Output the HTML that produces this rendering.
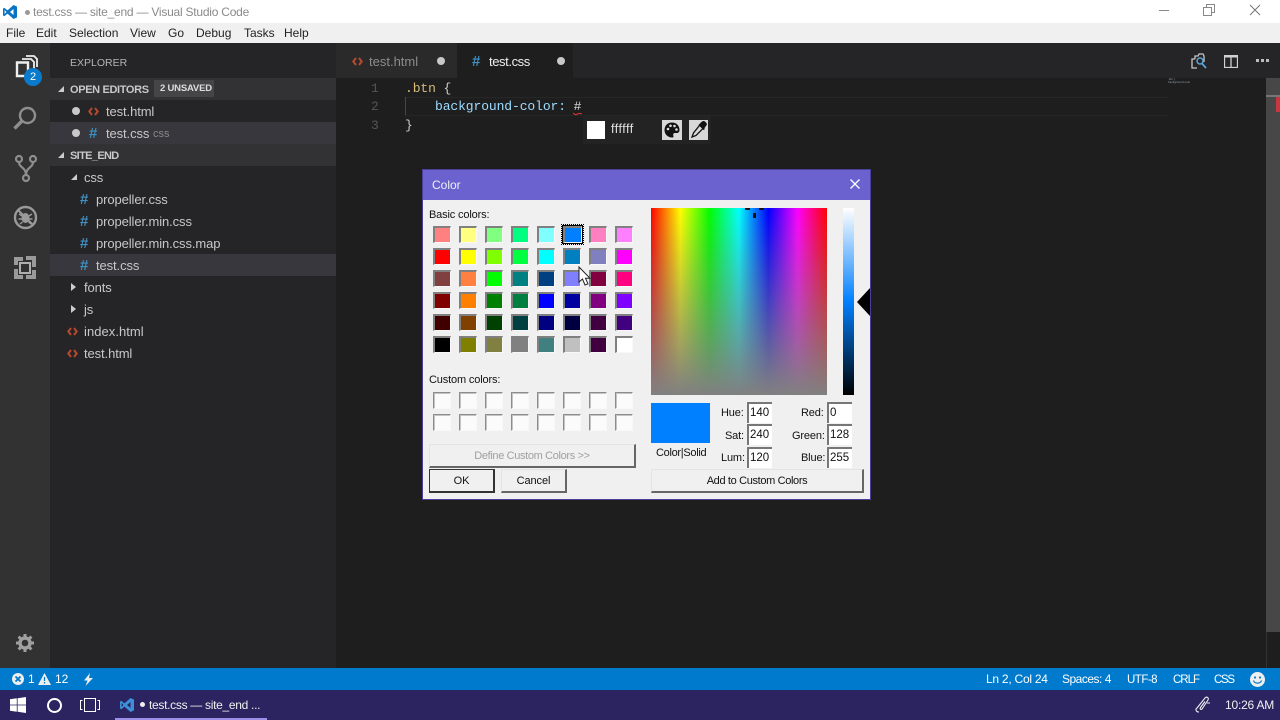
<!DOCTYPE html>
<html><head><meta charset="utf-8"><style>
*{box-sizing:border-box}
html,body{margin:0;padding:0}
body{width:1280px;height:720px;overflow:hidden;position:relative;background:#1f1e1f;font-family:"Liberation Sans",sans-serif;font-size:12px;color:#ccc}
.a{position:absolute}
.t{position:absolute;white-space:nowrap;line-height:16px}
.sw{position:absolute;width:18px;height:17px;border-style:solid;border-width:2px 1px 1px 2px;border-color:#808080 #f8f8f8 #f8f8f8 #808080}
.cw{position:absolute;width:18px;height:17px;background:#fbfbfb;border:1px solid;border-color:#8c8c8c #f8f8f8 #f8f8f8 #8c8c8c;box-shadow:inset 1px 1px 0 #c4c4c4}
.inp{position:absolute;background:#fff;border-top:2px solid #777;border-left:2px solid #777;color:#111;font-size:11.5px;line-height:19px;padding-left:1px;height:21px}
.btn{position:absolute;background:#f0f0f0;border:1px solid #e4e4e4;border-right:2px solid #666;border-bottom:2px solid #666;color:#111;text-align:center;font-size:11px;letter-spacing:-.1px;line-height:22px;height:24px}
.dt{color:#111;font-size:11px;letter-spacing:-.15px;margin-top:1px}
.f{font-size:13px;color:#c8c8c8;letter-spacing:-.1px;margin-top:1px}
.hash{position:absolute;color:#3f8fc2;font-size:15px;font-weight:bold;line-height:16px;margin-top:1px}
.ic{position:absolute}
.code{position:absolute;font-family:"Liberation Mono",monospace;font-size:13px;line-height:18px;white-space:pre;letter-spacing:-.1px;margin-top:1px}
.sb{position:absolute;top:671px;color:#fff;font-size:12px;line-height:16px;white-space:nowrap}
.m{top:25px;color:#222;font-size:12px}
</style></head><body>

<!-- title bar -->
<div class="a" style="left:0;top:0;width:1280px;height:23px;background:#fff"></div>
<svg class="a" style="left:2px;top:4px" width="16" height="16" viewBox="0 0 16 16"><path d="M11.5 1L15 2.6V13.4L11.5 15L5.5 9.6L2.2 12.2L1 11.4V4.6L2.2 3.8L5.5 6.4ZM11.5 5L8 8L11.5 11ZM2.6 6V10L4.4 8Z" fill="#0a74c4"/></svg>
<div class="a" style="left:25px;top:10px;width:5px;height:5px;border-radius:3px;background:#999"></div>
<div class="t" style="left:33px;top:4px;color:#8a8a8a;font-size:12px;letter-spacing:-.23px">test.css — site_end — Visual Studio Code</div>
<div class="a" style="left:1159px;top:10px;width:10px;height:1px;background:#888"></div>
<svg class="a" style="left:1203px;top:4px" width="12" height="12" viewBox="0 0 12 12"><path d="M.5 3.5H8.5V11.5H.5ZM3.5 3.5V.5H11.5V8.5H8.5" fill="none" stroke="#888"/></svg>
<svg class="a" style="left:1249px;top:4px" width="12" height="12" viewBox="0 0 12 12"><path d="M1 1L11 11M11 1L1 11" stroke="#777" stroke-width="1"/></svg>

<!-- menu -->
<div class="a" style="left:0;top:23px;width:1280px;height:20px;background:#f0f0f0"></div>
<div class="t m" style="left:6px">File</div>
<div class="t m" style="left:36px">Edit</div>
<div class="t m" style="left:69px">Selection</div>
<div class="t m" style="left:130px">View</div>
<div class="t m" style="left:168px">Go</div>
<div class="t m" style="left:196px">Debug</div>
<div class="t m" style="left:244px">Tasks</div>
<div class="t m" style="left:284px">Help</div>

<!-- activity bar -->
<div class="a" style="left:0;top:43px;width:50px;height:625px;background:#323233"></div>
<svg class="a" style="left:13px;top:54px" width="26" height="26" viewBox="0 0 26 26"><path d="M4 8.5H15V22H4Z" fill="none" stroke="#eee" stroke-width="2.4"/><path d="M9 5H18L21 8V17M13 2H21L24 5V13" fill="none" stroke="#eee" stroke-width="1.8"/></svg>
<div class="a" style="left:24px;top:68px;width:18px;height:18px;border-radius:9px;background:#0a7acc;color:#fff;font-size:11px;line-height:18px;text-align:center">2</div>
<svg class="a" style="left:12px;top:105px" width="26" height="26" viewBox="0 0 26 26"><circle cx="15.5" cy="10.5" r="7.5" fill="none" stroke="#8e8e8e" stroke-width="2.4"/><path d="M10 16L2.5 23.5" stroke="#8e8e8e" stroke-width="3.4"/></svg>
<svg class="a" style="left:13px;top:154px" width="26" height="28" viewBox="0 0 26 28"><g fill="none" stroke="#8e8e8e" stroke-width="2.2"><circle cx="6" cy="5" r="3"/><circle cx="20" cy="5" r="3"/><circle cx="13" cy="24" r="3"/><path d="M6 8C6 14 13 13 13 21M20 8C20 14 13 13 13 21"/></g></svg>
<svg class="a" style="left:13px;top:205px" width="25" height="25" viewBox="0 0 25 25"><circle cx="12.5" cy="12.5" r="10.5" fill="none" stroke="#9a9a9a" stroke-width="2.4"/><path d="M5 5L20 20" stroke="#9a9a9a" stroke-width="2"/><ellipse cx="12.5" cy="13" rx="4" ry="5" fill="#9a9a9a"/><path d="M6 9L9 11M19 9L16 11M5.5 14H9M19.5 14H16M7 19L9.5 17M18 19L15.500 17" stroke="#9a9a9a" stroke-width="1.400"/></svg>
<svg class="a" style="left:14px;top:256px" width="22" height="23" viewBox="0 0 22 23"><path d="M0 1H9V5H4V9H0ZM12 0H22V11H18V4H12ZM0 13H4V19H9V23H0ZM22 14V23H12V19H18V14Z" fill="#9a9a9a"/><rect x="6" y="7" width="10" height="10" fill="none" stroke="#b0b0b0" stroke-width="2"/></svg>
<svg class="a" style="left:15px;top:633px" width="20" height="20" viewBox="0 0 20 20"><circle cx="10" cy="10" r="5" fill="none" stroke="#a0a0a0" stroke-width="3.4"/><path d="M10 1V5M10 15V19M1 10H5M15 10H19M3.600 3.600L6.500 6.500M13.500 13.500L16.400 16.400M16.400 3.600L13.500 6.500M6.500 13.500L3.600 16.400" stroke="#a0a0a0" stroke-width="3"/></svg>

<!-- sidebar -->
<div class="a" style="left:50px;top:43px;width:286px;height:625px;background:#252427"></div>
<div class="t" style="left:70px;top:55px;font-size:10.5px;color:#b4b4b4">EXPLORER</div>
<div class="a" style="left:50px;top:78px;width:286px;height:22px;background:#323234"></div>
<div class="a" style="left:58px;top:86px;border-left:6px solid transparent;border-bottom:6px solid #ccc"></div>
<div class="t" style="left:70px;top:82px;font-size:11px;font-weight:bold;color:#c8c8c8;letter-spacing:-.35px">OPEN EDITORS</div>
<div class="a" style="left:154px;top:80px;width:60px;height:17px;background:#454547"></div>
<div class="t" style="left:160px;top:81px;font-size:9.5px;font-weight:bold;color:#ddd;letter-spacing:-.2px">2 UNSAVED</div>

<div class="a" style="left:72px;top:107px;width:8px;height:8px;border-radius:4px;background:#c8c8c8"></div>
<svg class="ic" style="left:88px;top:107px" width="11" height="9" viewBox="0 0 11 9"><path d="M4 1L1.300 4.500L4 8M7 1L9.700 4.500L7 8" fill="none" stroke="#b8492e" stroke-width="2"/></svg>
<div class="t f" style="left:106px;top:103px">test.html</div>
<div class="a" style="left:50px;top:122px;width:286px;height:22px;background:#37373d"></div>
<div class="a" style="left:72px;top:129px;width:8px;height:8px;border-radius:4px;background:#c8c8c8"></div>
<div class="hash" style="left:89px;top:125px">#</div>
<div class="t f" style="left:106px;top:125px">test.css</div>
<div class="t" style="left:153px;top:126px;font-size:11px;color:#8a8a8a">css</div>

<div class="a" style="left:50px;top:144px;width:286px;height:22px;background:#323234"></div>
<div class="a" style="left:58px;top:152px;border-left:6px solid transparent;border-bottom:6px solid #ccc"></div>
<div class="t" style="left:70px;top:148px;font-size:11px;font-weight:bold;color:#c8c8c8;letter-spacing:-.65px">SITE_END</div>

<div class="a" style="left:71px;top:174px;border-left:6px solid transparent;border-bottom:6px solid #ccc"></div>
<div class="t f" style="left:84px;top:169px">css</div>
<div class="hash" style="left:80px;top:191px">#</div>
<div class="t f" style="left:96px;top:191px">propeller.css</div>
<div class="hash" style="left:80px;top:213px">#</div>
<div class="t f" style="left:96px;top:213px">propeller.min.css</div>
<div class="hash" style="left:80px;top:235px">#</div>
<div class="t f" style="left:96px;top:235px">propeller.min.css.map</div>
<div class="a" style="left:50px;top:254px;width:286px;height:22px;background:#37373d"></div>
<div class="hash" style="left:80px;top:257px">#</div>
<div class="t f" style="left:96px;top:257px">test.css</div>
<div class="a" style="left:71px;top:283px;border-left:5px solid #ccc;border-top:4px solid transparent;border-bottom:4px solid transparent"></div>
<div class="t f" style="left:84px;top:279px">fonts</div>
<div class="a" style="left:71px;top:305px;border-left:5px solid #ccc;border-top:4px solid transparent;border-bottom:4px solid transparent"></div>
<div class="t f" style="left:84px;top:301px">js</div>
<svg class="ic" style="left:67px;top:327px" width="11" height="9" viewBox="0 0 11 9"><path d="M4 1L1.300 4.500L4 8M7 1L9.700 4.500L7 8" fill="none" stroke="#b8492e" stroke-width="2"/></svg>
<div class="t f" style="left:84px;top:323px;letter-spacing:.05px">index.html</div>
<svg class="ic" style="left:67px;top:349px" width="11" height="9" viewBox="0 0 11 9"><path d="M4 1L1.300 4.500L4 8M7 1L9.700 4.500L7 8" fill="none" stroke="#b8492e" stroke-width="2"/></svg>
<div class="t f" style="left:84px;top:345px">test.html</div>

<!-- tabs -->
<div class="a" style="left:336px;top:43px;width:944px;height:35px;background:#252426"></div>
<div class="a" style="left:336px;top:43px;width:121px;height:35px;background:#2b2a2b"></div>
<div class="a" style="left:457px;top:43px;width:116px;height:35px;background:#1e1e1f"></div>
<svg class="ic" style="left:352px;top:57px" width="11" height="9" viewBox="0 0 11 9"><path d="M4 1L1.300 4.500L4 8M7 1L9.700 4.500L7 8" fill="none" stroke="#b8492e" stroke-width="2"/></svg>
<div class="t" style="left:369px;top:54px;font-size:13px;color:#8c8c8c;letter-spacing:0">test.html</div>
<div class="a" style="left:437px;top:57px;width:8px;height:8px;border-radius:4px;background:#c8c8c8"></div>
<div class="hash" style="left:472px;top:53px">#</div>
<div class="t" style="left:489px;top:54px;font-size:13px;color:#f0f0f0;letter-spacing:-.4px">test.css</div>
<div class="a" style="left:557px;top:57px;width:8px;height:8px;border-radius:4px;background:#c8c8c8"></div>
<svg class="a" style="left:1191px;top:53px" width="17" height="17" viewBox="0 0 17 17"><path d="M4 6V3H7L8 1H12L13 3V9M6 15H1V6H4" fill="none" stroke="#c8c8c8" stroke-width="1.300"/><circle cx="9" cy="8" r="3" fill="none" stroke="#5aa4d8" stroke-width="1.500"/><path d="M11 10.500L15 15" stroke="#5aa4d8" stroke-width="1.800"/></svg>
<svg class="a" style="left:1224px;top:55px" width="14" height="13" viewBox="0 0 14 13"><path d="M.5 .5H13.500V12.500H.5ZM7 .5V12.500" fill="none" stroke="#d0d0d0" stroke-width="1.300"/><rect x="0" y="0" width="14" height="2.500" fill="#d0d0d0"/></svg>
<div class="a" style="left:1256px;top:59px;width:3px;height:3px;background:#bbb;box-shadow:5px 0 #bbb,10px 0 #bbb"></div>

<!-- editor -->
<div class="a" style="left:404px;top:97px;width:764px;height:1px;background:#262626"></div>
<div class="a" style="left:404px;top:115px;width:764px;height:1px;background:#262626"></div>
<div class="a" style="left:405px;top:97px;width:1px;height:18px;background:#3e4a50"></div>
<div class="code" style="left:371px;top:79px;color:#555">1</div>
<div class="code" style="left:371px;top:97px;color:#555">2</div>
<div class="code" style="left:371px;top:116px;color:#555">3</div>
<div class="code" style="left:405px;top:79px;color:#d7ba7d">.btn <span style="color:#ccc">{</span></div>
<div class="code" style="left:435px;top:97px;color:#9cdcfe">background-color: <span style="color:#ddd">#</span></div>
<div class="code" style="left:405px;top:116px;color:#ccc">}</div>
<svg class="a" style="left:573px;top:112px" width="9" height="4" viewBox="0 0 9 4"><path d="M0 1C2 3 3 3 4.500 2C6 1 7 1 9 2" fill="none" stroke="#d03030" stroke-width="1.200"/></svg>

<!-- color hover -->
<div class="a" style="left:583px;top:116px;width:128px;height:28px;background:#232323"></div>
<div class="a" style="left:587px;top:121px;width:18px;height:18px;background:#fff"></div>
<div class="t" style="left:611px;top:121px;font-size:12.5px;color:#e0e0e0;letter-spacing:.5px">ffffff</div>
<div class="a" style="left:662px;top:120px;width:20px;height:20px;background:#d8d8d8"></div>
<svg class="a" style="left:663px;top:121px" width="18" height="18" viewBox="0 0 18 18"><path d="M9 1.500C4.500 1.500 1.500 4.800 1.500 9C1.500 13.200 4.800 16.500 9 16.500C10.500 16.500 10.800 15.500 10.300 14.500C9.800 13.300 10.500 12 12 12H14C15.500 12 16.500 10.800 16.500 9C16.500 4.800 13.500 1.500 9 1.500Z" fill="#111"/><circle cx="5" cy="8" r="1.300" fill="#ddd"/><circle cx="7.500" cy="4.800" r="1.300" fill="#ddd"/><circle cx="11.500" cy="5" r="1.300" fill="#ddd"/><circle cx="13.500" cy="8.500" r="1.300" fill="#ddd"/></svg>
<div class="a" style="left:689px;top:120px;width:19px;height:20px;background:#d8d8d8"></div>
<svg class="a" style="left:689px;top:120px" width="19" height="20" viewBox="0 0 19 20"><path d="M12 3.500L15.500 7L7 15.500L3 17L4.500 13Z" fill="#d8d8d8" stroke="#111" stroke-width="1.300"/><path d="M11 3.500L13 1.500C14 .8 15 .8 16 1.500L17.500 3C18 4 18 5 17 6L15 8L16 9L14.500 10L9.500 5L11 3.500Z" fill="#111"/></svg>

<!-- scrollbar -->
<div class="a" style="left:1168px;top:78px;width:22px;height:6px;color:#8a9aa8;font-size:3px;line-height:3px;white-space:nowrap;overflow:hidden">.btn {<br>background-color: #</div>
<div class="a" style="left:1266px;top:78px;width:14px;height:554px;background:#474747"></div>
<div class="a" style="left:1266px;top:95px;width:14px;height:2px;background:#777"></div>
<div class="a" style="left:1266px;top:632px;width:1px;height:36px;background:#333"></div>
<div class="a" style="left:1276px;top:97px;width:4px;height:15px;background:#c8373f"></div>

<!-- dialog -->
<div class="a" style="left:422px;top:169px;width:449px;height:331px;background:#f0f0f0;border:1px solid #4a3f9a"></div>
<div class="a" style="left:423px;top:170px;width:447px;height:30px;background:#6b62d0"></div>
<div class="t" style="left:432px;top:177px;font-size:12px;color:#f0f0f0">Color</div>
<svg class="a" style="left:849px;top:178px" width="12" height="12" viewBox="0 0 12 12"><path d="M1.500 1.500L10.500 10.500M10.500 1.500L1.500 10.500" stroke="#fff" stroke-width="1.300"/></svg>
<div class="t dt" style="left:429px;top:206px">Basic colors:</div>
<div id="sw">
<div class="sw" style="left:433px;top:226px;background:#ff8080"></div><div class="sw" style="left:459px;top:226px;background:#ffff80"></div><div class="sw" style="left:485px;top:226px;background:#80ff80"></div><div class="sw" style="left:511px;top:226px;background:#00ff80"></div><div class="sw" style="left:537px;top:226px;background:#80ffff"></div><div class="a" style="left:561px;top:224px;width:23px;height:21px;border:1px dotted #000"></div><div class="a" style="left:562px;top:225px;width:21px;height:19px;border:1px solid #000;background:#f0f0f0"></div><div class="sw" style="left:563px;top:226px;width:19px;background:#0080ff"></div><div class="sw" style="left:589px;top:226px;background:#ff80c0"></div><div class="sw" style="left:615px;top:226px;background:#ff80ff"></div>
<div class="sw" style="left:433px;top:248px;background:#ff0000"></div><div class="sw" style="left:459px;top:248px;background:#ffff00"></div><div class="sw" style="left:485px;top:248px;background:#80ff00"></div><div class="sw" style="left:511px;top:248px;background:#00ff40"></div><div class="sw" style="left:537px;top:248px;background:#00ffff"></div><div class="sw" style="left:563px;top:248px;background:#0080c0"></div><div class="sw" style="left:589px;top:248px;background:#8080c0"></div><div class="sw" style="left:615px;top:248px;background:#ff00ff"></div>
<div class="sw" style="left:433px;top:270px;background:#804040"></div><div class="sw" style="left:459px;top:270px;background:#ff8040"></div><div class="sw" style="left:485px;top:270px;background:#00ff00"></div><div class="sw" style="left:511px;top:270px;background:#008080"></div><div class="sw" style="left:537px;top:270px;background:#004080"></div><div class="sw" style="left:563px;top:270px;background:#8080ff"></div><div class="sw" style="left:589px;top:270px;background:#800040"></div><div class="sw" style="left:615px;top:270px;background:#ff0080"></div>
<div class="sw" style="left:433px;top:292px;background:#800000"></div><div class="sw" style="left:459px;top:292px;background:#ff8000"></div><div class="sw" style="left:485px;top:292px;background:#008000"></div><div class="sw" style="left:511px;top:292px;background:#008040"></div><div class="sw" style="left:537px;top:292px;background:#0000ff"></div><div class="sw" style="left:563px;top:292px;background:#0000a0"></div><div class="sw" style="left:589px;top:292px;background:#800080"></div><div class="sw" style="left:615px;top:292px;background:#8000ff"></div>
<div class="sw" style="left:433px;top:314px;background:#400000"></div><div class="sw" style="left:459px;top:314px;background:#804000"></div><div class="sw" style="left:485px;top:314px;background:#004000"></div><div class="sw" style="left:511px;top:314px;background:#004040"></div><div class="sw" style="left:537px;top:314px;background:#000080"></div><div class="sw" style="left:563px;top:314px;background:#000040"></div><div class="sw" style="left:589px;top:314px;background:#400040"></div><div class="sw" style="left:615px;top:314px;background:#400080"></div>
<div class="sw" style="left:433px;top:336px;background:#000000"></div><div class="sw" style="left:459px;top:336px;background:#808000"></div><div class="sw" style="left:485px;top:336px;background:#808040"></div><div class="sw" style="left:511px;top:336px;background:#808080"></div><div class="sw" style="left:537px;top:336px;background:#408080"></div><div class="sw" style="left:563px;top:336px;background:#c0c0c0"></div><div class="sw" style="left:589px;top:336px;background:#400040"></div><div class="sw" style="left:615px;top:336px;background:#ffffff"></div>
</div>
<svg class="a" style="left:578px;top:266px" width="14" height="20" viewBox="0 0 14 20"><path d="M1 1V16L4.500 13L7 19L10 17.800L7.500 12.300H12Z" fill="#fff" stroke="#222" stroke-width="1"/></svg>

<div class="t dt" style="left:429px;top:371px">Custom colors:</div>
<div class="cw" style="left:433px;top:392px"></div><div class="cw" style="left:459px;top:392px"></div><div class="cw" style="left:485px;top:392px"></div><div class="cw" style="left:511px;top:392px"></div><div class="cw" style="left:537px;top:392px"></div><div class="cw" style="left:563px;top:392px"></div><div class="cw" style="left:589px;top:392px"></div><div class="cw" style="left:615px;top:392px"></div>
<div class="cw" style="left:433px;top:414px"></div><div class="cw" style="left:459px;top:414px"></div><div class="cw" style="left:485px;top:414px"></div><div class="cw" style="left:511px;top:414px"></div><div class="cw" style="left:537px;top:414px"></div><div class="cw" style="left:563px;top:414px"></div><div class="cw" style="left:589px;top:414px"></div><div class="cw" style="left:615px;top:414px"></div>

<div class="btn" style="left:429px;top:444px;width:207px;color:#a0a0a0;letter-spacing:-.35px">Define Custom Colors &gt;&gt;</div>
<div class="btn" style="left:429px;top:469px;width:66px;border:1px solid #333;border-right:2px solid #333;border-bottom:2px solid #333">OK</div>
<div class="btn" style="left:501px;top:469px;width:66px">Cancel</div>

<div class="a" style="left:651px;top:208px;width:176px;height:187px;background:linear-gradient(to bottom,rgba(128,128,128,0),#808080),linear-gradient(to right,#f00,#ff0,#0f0,#0ff,#00f,#f0f,#f00)"></div>
<div class="a" style="left:745px;top:208px;width:5px;height:2px;background:#111"></div>
<div class="a" style="left:759px;top:208px;width:5px;height:2px;background:#111"></div>
<div class="a" style="left:753px;top:213px;width:3px;height:5px;background:#111"></div>
<div class="a" style="left:843px;top:208px;width:11px;height:187px;background:linear-gradient(to bottom,#fff,#0080ff 50%,#000)"></div>
<div class="a" style="left:857px;top:288px;border-right:13px solid #000;border-top:14px solid transparent;border-bottom:14px solid transparent"></div>

<div class="a" style="left:651px;top:403px;width:59px;height:40px;background:#0080ff"></div>
<div class="t dt" style="left:656px;top:444px;letter-spacing:-.3px">Color|Solid</div>
<div class="t dt" style="left:721px;top:404px">Hue:</div>
<div class="t dt" style="left:725px;top:427px">Sat:</div>
<div class="t dt" style="left:721px;top:449px">Lum:</div>
<div class="t dt" style="left:801px;top:404px">Red:</div>
<div class="t dt" style="left:792px;top:427px">Green:</div>
<div class="t dt" style="left:801px;top:449px">Blue:</div>
<div class="inp" style="left:747px;top:402px;width:25px">140</div>
<div class="inp" style="left:747px;top:424px;width:25px">240</div>
<div class="inp" style="left:747px;top:447px;width:25px">120</div>
<div class="inp" style="left:827px;top:402px;width:25px">0</div>
<div class="inp" style="left:827px;top:424px;width:25px">128</div>
<div class="inp" style="left:827px;top:447px;width:25px">255</div>
<div class="btn" style="left:651px;top:469px;width:213px;letter-spacing:-.35px">Add to Custom Colors</div>

<!-- status bar -->
<div class="a" style="left:0;top:668px;width:1280px;height:22px;background:#007acc"></div>
<svg class="a" style="left:12px;top:673px" width="12" height="12" viewBox="0 0 12 12"><circle cx="6" cy="6" r="6" fill="#eee"/><path d="M3.500 3.500L8.500 8.500M8.500 3.500L3.500 8.500" stroke="#007acc" stroke-width="1.800"/></svg>
<div class="sb" style="left:28px">1</div>
<svg class="a" style="left:38px;top:673px" width="13" height="12" viewBox="0 0 13 12"><path d="M6.500 0L13 12H0Z" fill="#eee"/><path d="M6.500 4V8M6.500 9V10.500" stroke="#007acc" stroke-width="1.300"/></svg>
<div class="sb" style="left:55px">12</div>
<svg class="a" style="left:83px;top:673px" width="11" height="13" viewBox="0 0 11 13"><path d="M7 0L1 7.500H4.500L2.500 13L10 5H6Z" fill="#eee"/></svg>
<div class="sb" style="left:986px;letter-spacing:-.25px">Ln 2, Col 24</div>
<div class="sb" style="left:1062px;letter-spacing:-.5px">Spaces: 4</div>
<div class="sb" style="left:1127px;top:672px;font-size:11.5px;letter-spacing:-.5px">UTF-8</div>
<div class="sb" style="left:1173px;top:672px;font-size:11.5px;letter-spacing:-1px">CRLF</div>
<div class="sb" style="left:1214px;top:672px;font-size:11.5px;letter-spacing:-1.300px">CSS</div>
<svg class="a" style="left:1250px;top:672px" width="15" height="15" viewBox="0 0 15 15"><circle cx="7.500" cy="7.500" r="7.500" fill="#eee"/><circle cx="5" cy="5.500" r="1.100" fill="#007acc"/><circle cx="10" cy="5.500" r="1.100" fill="#007acc"/><path d="M3.500 8.500C4.500 12 10.500 12 11.500 8.500" fill="none" stroke="#007acc" stroke-width="1.200"/></svg>

<!-- taskbar -->
<div class="a" style="left:0;top:690px;width:1280px;height:30px;background:#2c2460"></div>
<div class="a" style="left:115px;top:718px;width:152px;height:2px;background:#9b8fe8"></div>
<svg class="a" style="left:10px;top:697px" width="16" height="16" viewBox="0 0 16 16"><path d="M0 2.300L6.800 1.300V7.600H0ZM7.600 1.200L16 0V7.600H7.600ZM0 8.400H6.800V14.700L0 13.700ZM7.600 8.400H16V16L7.600 14.800Z" fill="#fff"/></svg>
<div class="a" style="left:47px;top:698px;width:15px;height:15px;border-radius:8px;border:2px solid #fff"></div>
<svg class="a" style="left:80px;top:698px" width="20" height="14" viewBox="0 0 20 14"><path d="M4.500 .5H15.500V13.500H4.500ZM2.500 2.500H.5V11.500H2.500M17.500 2.500H19.500V11.500H17.500" fill="none" stroke="#fff"/></svg>
<svg class="a" style="left:119px;top:697px" width="16" height="16" viewBox="0 0 16 16"><path d="M11.500 1L15 2.600V13.400L11.500 15L5.500 9.600L2.200 12.200L1 11.400V4.600L2.200 3.800L5.500 6.400ZM11.500 5L8 8L11.500 11ZM2.600 6V10L4.400 8Z" fill="#3d8fd8"/></svg>
<div class="a" style="left:140px;top:702px;width:5px;height:5px;border-radius:3px;background:#f0f0f0"></div>
<div class="t" style="left:149px;top:697px;color:#f0f0f0;font-size:12px;letter-spacing:-.3px">test.css — site_end ...</div>
<svg class="a" style="left:1194px;top:696px" width="18" height="18" viewBox="0 0 18 18"><path d="M5 16C2 16 1 13 3 12L11 2C13 0 15 2 14 4L8 13C7 14 5.500 13 6.500 11.500L11 5.500M13 7H16" fill="none" stroke="#eee" stroke-width="1.100"/></svg>
<div class="t" style="left:1225px;top:697px;color:#f0f0f0;font-size:12px;letter-spacing:-.2px">10:26 AM</div>
</body></html>
